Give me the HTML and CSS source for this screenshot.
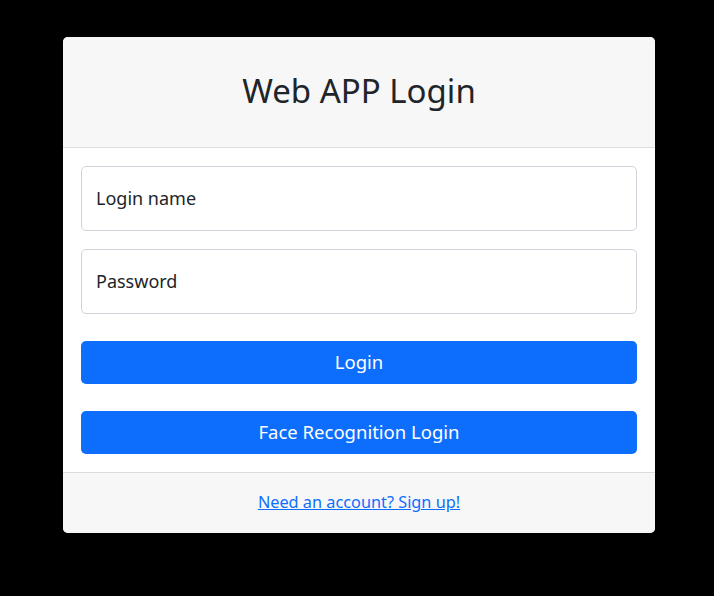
FILE: index.html
```html
<!DOCTYPE html>
<html lang="en">
<head>
<meta charset="utf-8">
<title>Web APP Login</title>
<link rel="stylesheet" href="styles.css">
</head>
<body>
<div class="card">
  <div class="card-header"><h1 class="title">Web APP Login</h1></div>
  <form class="card-body">
    <input class="field" type="text" placeholder="Login name">
    <input class="field" type="password" placeholder="Password">
    <button class="btn btn-first" type="button">Login</button>
    <button class="btn" type="button">Face Recognition Login</button>
  </form>
  <div class="card-footer"><a class="link" href="#">Need an account? Sign up!</a></div>
</div>
</body>
</html>
```
FILE: styles.css
```css
html, body { margin: 0; padding: 0; background: #000; }
body {
  font-family: "Noto Sans", "Open Sans", sans-serif;
  color: #212529;
  padding: 37px 0 0 63px;
}
.card {
  width: 592px;
  background: #fff;
  border-radius: 5px;
  overflow: hidden;
  display: flex;
  flex-direction: column;
}
.card-header {
  background: #f7f7f7;
  height: 110px;
  border-bottom: 1px solid #dcdcdc;
  display: flex;
  align-items: center;
  justify-content: center;
}
.title {
  margin: 0;
  font-weight: 400;
  font-size: 33px;
  color: #212529;
  padding-bottom: 4px;
}
.card-body {
  padding: 18px;
  display: flex;
  flex-direction: column;
}
.field {
  height: 65px;
  box-sizing: border-box;
  border: 1px solid #ced4da;
  border-radius: 5px;
  padding: 0 14px 2px;
  font-family: inherit;
  font-size: 18px;
  color: #212529;
  margin-bottom: 18px;
  outline: none;
}
.field::placeholder { color: #212529; opacity: 1; }
.btn {
  height: 43px;
  border: 0;
  border-radius: 5px;
  background: #0d6efd;
  color: #fff;
  font-family: inherit;
  font-size: 18.5px;
  padding: 0 0 2px;
}
.btn-first { margin-top: 9px; margin-bottom: 27px; }
.card-footer {
  background: #f7f7f7;
  border-top: 1px solid #dcdcdc;
  height: 60px;
  display: flex;
  align-items: center;
  justify-content: center;
}
.link {
  color: #0d6efd;
  font-size: 16.3px;
  text-decoration: underline;
  padding-bottom: 2px;
}
```
